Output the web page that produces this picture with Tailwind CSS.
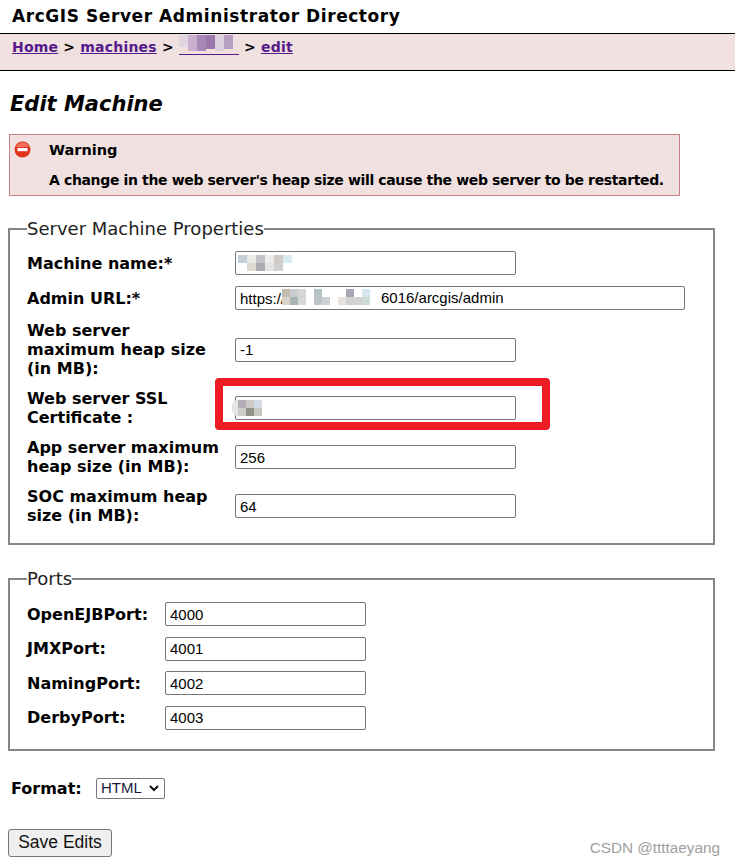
<!DOCTYPE html>
<html lang="en">
<head>
    <meta charset="UTF-8">
    <meta name="viewport" content="width=device-width, initial-scale=1.0">
    <title>Edit Machine - ArcGIS Server Administrator Directory</title>
    <script src="https://cdn.jsdelivr.net/npm/@tailwindcss/browser@4"></script>
</head>
<body class="relative h-[867px] overflow-hidden bg-white font-['DejaVu_Sans',sans-serif] text-black">

    <!-- Title and breadcrumb -->
    <div class="flex h-[33px] items-center px-3 text-[17px] font-bold tracking-[0.57px]">ArcGIS Server Administrator Directory</div>
    <div class="h-[38px] border-y border-black bg-[#f0e0e0] px-3 pt-[3px] text-[14px] font-bold tracking-[0.2px]">
        <a href="#" class="text-[#551a8b] underline">Home</a> &gt;
        <a href="#" class="text-[#551a8b] underline">machines</a> &gt;
        <a href="#" class="relative inline-block w-[60px] align-baseline text-[#551a8b]">&nbsp;
            <span class="absolute top-[-2px] left-0 flex h-4 items-start">
                <span class="h-3 w-[9px] bg-[#e0d4e0]"></span><span class="h-4 w-[9px] bg-[#c9b0cf]"></span><span class="h-4 w-[9px] bg-[#a987b8]"></span><span class="h-3.5 w-[9px] bg-[#9a78ae]"></span><span class="h-4 w-[9px] bg-[#dccfe0]"></span><span class="h-3.5 w-[9px] bg-[#b79fc4]"></span>
            </span>
            <span class="absolute top-[17px] left-0 h-px w-[60px] bg-[#551a8b]"></span>
        </a> &gt;
        <a href="#" class="text-[#551a8b] underline">edit</a>
    </div>

    <h2 class="mt-[18px] ml-[10px] text-[21px] leading-[30px] font-bold italic">Edit Machine</h2>

    <!-- Warning -->
    <div class="mt-[15px] ml-[9px] flex h-[62px] w-[671px] border border-[#c58089] bg-[#f0e0e0] font-bold">
        <div class="w-[39px] pt-[6px] pl-1">
            <svg width="17" height="17" viewBox="0 0 17 17">
                <circle cx="8.5" cy="8.5" r="8" fill="#e0341c"/>
                <path d="M2 6a7 7 0 0 1 13 0z" fill="#f0705a"/>
                <rect x="3.5" y="7" width="10" height="3.2" fill="#fff"/>
            </svg>
        </div>
        <div class="pt-[6px] whitespace-nowrap leading-[19px]">
            <p class="text-[14.5px]">Warning</p>
            <p class="mt-[11px] text-[14px] tracking-[-0.36px]">A change in the web server's heap size will cause the web server to be restarted.</p>
        </div>
    </div>

    <!-- Server Machine Properties -->
    <fieldset class="mt-[23px] ml-2 h-[326px] w-[707px] border-2 border-[#858585] pl-[17px]">
        <legend class="text-[18px] leading-[20px] font-normal text-[#222]">Server Machine Properties</legend>
        <div class="mt-[12px] grid grid-cols-[208px_1fr] items-center gap-y-[11px] text-[16px] leading-[19px] font-bold">
            <label>Machine name:*</label>
            <div class="relative">
                <input type="text" class="h-6 w-[281px] rounded-[2px] border border-[#767676] bg-white px-1 font-['Liberation_Sans',sans-serif] text-[15px] font-normal">
                <div class="absolute top-[4px] left-[3px] grid grid-cols-[repeat(7,9px)] grid-rows-[repeat(2,8px)]">
                    <span class="bg-[#c3ced8]"></span><span class="bg-[#eceae8]"></span><span class="bg-[#c5c3ca]"></span><span class="bg-[#ececec]"></span><span class="bg-[#cfcbc6]"></span><span class="bg-[#d8eaf4]"></span><span></span>
                    <span></span><span class="bg-[#ddd8d0]"></span><span class="bg-[#adaab0]"></span><span class="bg-[#e4e4e4]"></span><span class="bg-[#d2d0ce]"></span><span></span><span></span>
                </div>
            </div>

            <label>Admin URL:*</label>
            <div class="relative">
                <input type="text" value="https://" class="h-6 w-[450px] rounded-[2px] border border-[#767676] bg-white px-1 font-['Liberation_Sans',sans-serif] text-[15px] font-normal">
                <span class="absolute top-[3px] left-[146px] font-['Liberation_Sans',sans-serif] text-[15px] leading-[18px] font-normal">6016/arcgis/admin</span>
                <div class="absolute top-[3px] left-[47px] grid grid-cols-[repeat(12,8px)] grid-rows-[repeat(2,8px)]">
                    <span class="bg-[#c4bcae]"></span><span class="bg-[#c8ced0]"></span><span class="bg-[#d8d6d2]"></span><span></span><span class="bg-[#b6c2c4]"></span><span></span><span></span><span></span><span class="bg-[#a8a8b4]"></span><span></span><span class="bg-[#d5e6ee]"></span><span></span>
                    <span class="bg-[#d8d4cc]"></span><span class="bg-[#a9b4b4]"></span><span class="bg-[#d6d8da]"></span><span></span><span class="bg-[#bcc6c8]"></span><span class="bg-[#cdd0d6]"></span><span></span><span class="bg-[#e6e2e0]"></span><span class="bg-[#d0d0d0]"></span><span class="bg-[#d2d2d2]"></span><span class="bg-[#cddcd6]"></span><span></span>
                </div>
            </div>

            <label>Web server<br>maximum heap size<br>(in MB):</label>
            <input type="text" value="-1" class="h-6 w-[281px] rounded-[2px] border border-[#767676] bg-white px-1 font-['Liberation_Sans',sans-serif] text-[15px] font-normal">

            <label>Web server SSL<br>Certificate :</label>
            <div class="relative">
                <input type="text" class="h-6 w-[281px] rounded-[2px] border border-[#767676] bg-white px-1 font-['Liberation_Sans',sans-serif] text-[15px] font-normal">
                <div class="absolute top-[4px] left-[-3px] grid grid-cols-[repeat(3,8px)] grid-rows-[repeat(2,8px)] rounded-l-md bg-[#e6e6e6] pl-[6px]">
                    <span class="bg-[#b4aeb6]"></span><span class="bg-[#cfcac8]"></span><span class="bg-[#d2dae4]"></span>
                    <span class="bg-[#cfcec8]"></span><span class="bg-[#8f948a]"></span><span class="bg-[#c8c8c0]"></span>
                </div>
                <!-- red annotation box -->
                <div class="absolute top-[-18px] left-[-20px] h-[52px] w-[335px] rounded-[4px] border-[8px] border-[#ee1c25]"></div>
            </div>

            <label>App server maximum<br>heap size (in MB):</label>
            <input type="text" value="256" class="h-6 w-[281px] rounded-[2px] border border-[#767676] bg-white px-1 font-['Liberation_Sans',sans-serif] text-[15px] font-normal">

            <label>SOC maximum heap<br>size (in MB):</label>
            <input type="text" value="64" class="h-6 w-[281px] rounded-[2px] border border-[#767676] bg-white px-1 font-['Liberation_Sans',sans-serif] text-[15px] font-normal">
        </div>
    </fieldset>

    <!-- Ports -->
    <fieldset class="mt-[24px] ml-2 h-[182px] w-[707px] border-2 border-[#858585] pl-[17px]">
        <legend class="text-[18px] leading-[20px] font-normal text-[#222]">Ports</legend>
        <div class="mt-[13px] grid grid-cols-[138px_1fr] items-center gap-y-[10.5px] text-[16px] leading-[19px] font-bold">
            <label>OpenEJBPort:</label>
            <input type="text" value="4000" class="h-6 w-[201px] rounded-[2px] border border-[#767676] bg-white px-1 font-['Liberation_Sans',sans-serif] text-[15px] font-normal">
            <label>JMXPort:</label>
            <input type="text" value="4001" class="h-6 w-[201px] rounded-[2px] border border-[#767676] bg-white px-1 font-['Liberation_Sans',sans-serif] text-[15px] font-normal">
            <label>NamingPort:</label>
            <input type="text" value="4002" class="h-6 w-[201px] rounded-[2px] border border-[#767676] bg-white px-1 font-['Liberation_Sans',sans-serif] text-[15px] font-normal">
            <label>DerbyPort:</label>
            <input type="text" value="4003" class="h-6 w-[201px] rounded-[2px] border border-[#767676] bg-white px-1 font-['Liberation_Sans',sans-serif] text-[15px] font-normal">
        </div>
    </fieldset>

    <!-- Format and save -->
    <div class="mt-[26px] ml-[11px] flex h-[22px] items-center text-[16px] font-bold">
        <span class="mt-[2px] w-[85px]">Format:</span>
        <div class="flex h-[21px] w-[69px] items-center justify-between rounded-[2px] border border-[#767676] px-1 font-['Liberation_Sans',sans-serif] text-[15px] font-normal text-[#1a1a40]">
            HTML
            <svg width="12" height="8" viewBox="0 0 12 8"><path d="M2 2l4 4 4-4" fill="none" stroke="#111" stroke-width="2"/></svg>
        </div>
    </div>
    <button class="mt-[30px] ml-2 h-[28px] w-[104px] rounded-[3px] border border-[#767676] bg-[#efefef] font-['Liberation_Sans',sans-serif] text-[17.5px] leading-none text-[#111]">Save Edits</button>

    <!-- Watermark -->
    <div class="absolute right-[15px] bottom-[7px] font-['Liberation_Sans',sans-serif] text-[15.3px] text-[#a0a0a0]">CSDN @ttttaeyang</div>
</body>
</html>
